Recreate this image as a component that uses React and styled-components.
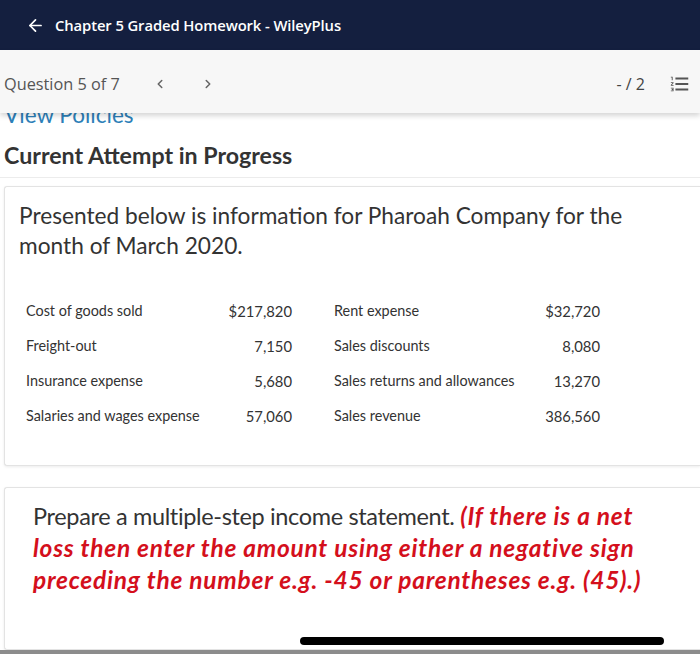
import React from "react";
import styled, { createGlobalStyle } from "styled-components";
import { ArrowLeft, ChevronLeft, ChevronRight } from "lucide-react";
import { MdFormatListNumbered } from "react-icons/md";

const Global = createGlobalStyle`
  html, body {
    margin: 0;
    padding: 0;
    background: #fff;
    overflow: hidden;
  }
  body {
    font-family: "Lato", "Open Sans", sans-serif;
    color: #333;
  }
`;

let S = {};
S.Page = styled.div`
  position: relative;
  width: 700px;
  height: 660px;
  overflow: hidden;
  display: flex;
  flex-direction: column;
`;

S.Header = styled.header`
  height: 50px;
  background: #141f3f;
  display: flex;
  align-items: center;
  gap: 10px;
  padding-left: 26px;
  color: #fff;
  flex-shrink: 0;

  & h1 {
    margin: 0;
    font-family: "Open Sans", sans-serif;
    font-weight: 600;
    font-size: 14.8px;
    letter-spacing: -0.1px;
  }
`;

S.SubBar = styled.div`
  position: relative;
  z-index: 2;
  height: 63px;
  background: #f7f7f7;
  box-shadow: 0 3px 5px rgba(0, 0, 0, 0.16);
  display: flex;
  align-items: center;
  padding: 5px 9px 0 4px;
  box-sizing: border-box;
  font-family: "Open Sans", sans-serif;
  color: #555;
  flex-shrink: 0;
`;

S.QLabel = styled.span`
  font-size: 16.3px;
`;

S.Nav = styled.div`
  display: flex;
  gap: 34px;
  margin-left: 33px;
  color: #666;
`;

S.Score = styled.span`
  margin-left: auto;
  font-size: 16px;
  color: #444;
  margin-right: 24px;
`;

S.Content = styled.main`
  padding-left: 4px;
  flex: 1;
  display: flex;
  flex-direction: column;
`;

S.Policies = styled.div`
  margin-top: -11px;
  font-size: 22.5px;
  line-height: 26px;
  color: #2d7fb8;
`;

S.Attempt = styled.h2`
  margin: 14px 0 9px;
  font-size: 23.2px;
  line-height: 26px;
  font-weight: 700;
  color: #333;
`;

S.Rule = styled.hr`
  margin: 0 0 8px -4px;
  border: none;
  border-top: 1px solid #ececec;
`;

S.Card = styled.section`
  background: #fff;
  border: 1px solid #e3e3e3;
  border-right: none;
  border-radius: 3px 0 0 3px;
  box-shadow: 0 1px 3px rgba(0, 0, 0, 0.08);
  padding: ${(p) => p.$pad};
  box-sizing: border-box;
`;

S.Lead = styled.p`
  margin: 0;
  font-size: 22.7px;
  line-height: 30px;
  color: #333;
  max-width: 640px;
`;

S.Table = styled.div`
  display: grid;
  grid-template-columns: 200px 66px 42px 200px 66px;
  margin: 32px 0 0 7px;
  font-size: 14.4px;
  color: #333;

  & > span {
    height: 35px;
    display: flex;
    align-items: center;
    white-space: nowrap;
  }

  & > span.num {
    justify-content: flex-end;
    font-size: 14.8px;
  }
`;

S.Prompt = styled.p`
  margin: 0;
  font-size: 23.5px;
  line-height: 31px;
  color: #333;
  letter-spacing: -0.35px;
  max-width: 616px;

  & em {
    color: #d40f1c;
    font-weight: 700;
    font-size: 24.5px;
    line-height: 31px;
    letter-spacing: 0.75px;
  }
`;

S.SecondCard = styled(S.Card)`
  margin-top: 21px;
  flex: 1;
`;

S.Bottom = styled.div`
  height: 4px;
  margin-bottom: 6px;
  background: #8c8c8c;
  flex-shrink: 0;
`;

S.Home = styled.div`
  position: absolute;
  left: 300px;
  bottom: 15px;
  width: 364px;
  height: 8px;
  border-radius: 4px;
  background: #000;
`;

const rows = [
  ["Cost of goods sold", "$217,820", "Rent expense", "$32,720"],
  ["Freight-out", "7,150", "Sales discounts", "8,080"],
  ["Insurance expense", "5,680", "Sales returns and allowances", "13,270"],
  ["Salaries and wages expense", "57,060", "Sales revenue", "386,560"],
];

const App = () => {
  return (
    <S.Page>
      <Global />
      <S.Header>
        <ArrowLeft size={19} strokeWidth={2.2} />
        <h1>Chapter 5 Graded Homework - WileyPlus</h1>
      </S.Header>
      <S.SubBar>
        <S.QLabel>Question 5 of 7</S.QLabel>
        <S.Nav>
          <ChevronLeft size={14} strokeWidth={2.6} />
          <ChevronRight size={14} strokeWidth={2.6} />
        </S.Nav>
        <S.Score>- / 2</S.Score>
        <MdFormatListNumbered size={22} color="#555" />
      </S.SubBar>
      <S.Content>
        <S.Policies>View Policies</S.Policies>
        <S.Attempt>Current Attempt in Progress</S.Attempt>
        <S.Rule />
        <S.Card $pad="14px 14px 32px">
          <S.Lead>
            Presented below is information for Pharoah Company for the month
            of March 2020.
          </S.Lead>
          <S.Table>
            {rows.map((r, i) => (
              <React.Fragment key={i}>
                <span>{r[0]}</span>
                <span className="num">{r[1]}</span>
                <span />
                <span>{r[2]}</span>
                <span className="num">{r[3]}</span>
              </React.Fragment>
            ))}
          </S.Table>
        </S.Card>
        <S.SecondCard $pad="12px 28px">
          <S.Prompt>
            Prepare a multiple-step income statement.{" "}
            <em>
              (If there is a net loss then enter the amount using either a
              negative sign preceding the number e.g. -45 or parentheses e.g.
              (45).)
            </em>
          </S.Prompt>
        </S.SecondCard>
      </S.Content>
      <S.Bottom />
      <S.Home />
    </S.Page>
  );
};

export default App;
